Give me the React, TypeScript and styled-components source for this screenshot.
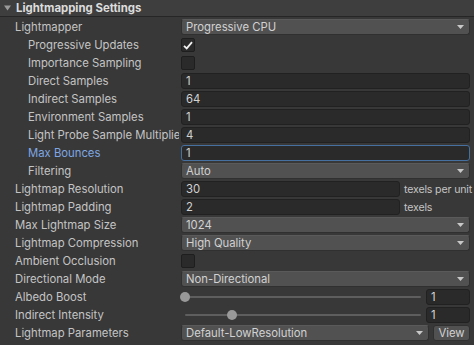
import React from "react";
import styled, { createGlobalStyle } from "styled-components";

const Global = createGlobalStyle`
  html, body { margin: 0; padding: 0; background: #383838; }
  body { font-family: Inter, "Noto Sans", "Liberation Sans", sans-serif; font-size: 11.3px; color: #c4c4c4; }
  * { box-sizing: border-box; }
`;

const Panel = styled.div`
  width: 474px;
  height: 345px;
  background: #383838;
  overflow: hidden;
`;

const Header = styled.div`
  height: 17px;
  display: flex;
  align-items: center;
  gap: 5px;
  padding-left: 4px;
  background: #3e3e3e;
  border-bottom: 1px solid #262626;
`;

const Title = styled.span`
  font-weight: 700;
  color: #dcdcdc;
  font-size: 11.4px;
  line-height: 16px;
`;

const Rows = styled.div`
  display: flex;
  flex-direction: column;
  padding-top: 1px;
`;

const Row = styled.div`
  height: 18px;
  display: flex;
  align-items: center;
  padding: 0 4px 0 15px;
`;

const Label = styled.div<{ $indent: number; $focused?: boolean }>`
  width: 164px;
  margin-right: 2px;
  padding-left: ${(p) => p.$indent * 13}px;
  white-space: nowrap;
  overflow: hidden;
  color: ${(p) => (p.$focused ? "#7ea7e3" : "#c4c4c4")};
  line-height: 18px;
  flex-shrink: 0;
`;

const Control = styled.div`
  flex: 1;
  display: flex;
  align-items: center;
  gap: 4px;
  height: 16px;
  min-width: 0;
`;

const Dropdown = styled.div`
  flex: 1;
  height: 16px;
  display: flex;
  align-items: center;
  justify-content: space-between;
  padding: 0 5px 0 4px;
  background: #515151;
  border: 1px solid #303030;
  border-top-color: #5a5a5a;
  border-radius: 3px;
  color: #d2d2d2;
  line-height: 14px;
  white-space: nowrap;
  min-width: 0;
`;

const Field = styled.div<{ $focused?: boolean }>`
  flex: 1;
  height: 16px;
  display: flex;
  align-items: center;
  padding: 0 4px;
  background: #2a2a2a;
  border: 1px solid ${(p) => (p.$focused ? "#46709f" : "#212121")};
  border-radius: 3px;
  color: #d2d2d2;
  line-height: 14px;
  min-width: 0;
`;

const NumberBox = styled(Field)`
  flex: 0 0 44px;
`;

const Suffix = styled.span`
  flex: 0 0 66px;
  min-width: 0;
  color: #c4c4c4;
  white-space: nowrap;
  font-size: 10.6px;
  letter-spacing: -0.15px;
`;

const Check = styled.div`
  width: 14px;
  height: 14px;
  background: #2a2a2a;
  border: 1px solid #1e1e1e;
  border-radius: 2px;
  display: flex;
  align-items: center;
  justify-content: center;
`;

const SliderArea = styled.div`
  flex: 1;
  height: 16px;
  position: relative;
`;

const Track = styled.div`
  position: absolute;
  left: 4px;
  right: 1px;
  top: 7px;
  height: 2px;
  border-radius: 1px;
  background: #5e5e5e;
`;

const Thumb = styled.div`
  position: absolute;
  top: 3px;
  width: 10px;
  height: 10px;
  margin-left: -5px;
  border-radius: 50%;
  background: #999999;
`;

const Button = styled.div`
  flex: 0 0 37px;
  height: 16px;
  display: flex;
  align-items: center;
  justify-content: center;
  background: #515151;
  border: 1px solid #303030;
  border-radius: 3px;
  color: #d2d2d2;
`;

const Arrow = () => (
  <svg width="7" height="4" viewBox="0 0 7 4" style={{ flexShrink: 0 }}>
    <path d="M0 0 H7 L3.5 4 Z" fill="#c8c8c8" />
  </svg>
);

const Foldout = () => (
  <svg width="7" height="6" viewBox="0 0 7 6">
    <path d="M0 0.5 H7 L3.5 5.5 Z" fill="#9a9a9a" />
  </svg>
);

const Tick = () => (
  <svg width="10" height="9" viewBox="0 0 10 9">
    <path d="M1 4.8 L3.7 7.4 L9 1.2" stroke="#f0f0f0" strokeWidth="1.8" fill="none" />
  </svg>
);

type Item =
  | { kind: "dropdown"; label: string; indent: number; value: string; button?: string }
  | { kind: "check"; label: string; indent: number; checked: boolean }
  | { kind: "field"; label: string; indent: number; value: string; suffix?: string; focused?: boolean }
  | { kind: "slider"; label: string; indent: number; value: string; frac: number };

const items: Item[] = [
  { kind: "dropdown", label: "Lightmapper", indent: 0, value: "Progressive CPU" },
  { kind: "check", label: "Progressive Updates", indent: 1, checked: true },
  { kind: "check", label: "Importance Sampling", indent: 1, checked: false },
  { kind: "field", label: "Direct Samples", indent: 1, value: "1" },
  { kind: "field", label: "Indirect Samples", indent: 1, value: "64" },
  { kind: "field", label: "Environment Samples", indent: 1, value: "1" },
  { kind: "field", label: "Light Probe Sample Multiplier", indent: 1, value: "4" },
  { kind: "field", label: "Max Bounces", indent: 1, value: "1", focused: true },
  { kind: "dropdown", label: "Filtering", indent: 1, value: "Auto" },
  { kind: "field", label: "Lightmap Resolution", indent: 0, value: "30", suffix: "texels per unit" },
  { kind: "field", label: "Lightmap Padding", indent: 0, value: "2", suffix: "texels" },
  { kind: "dropdown", label: "Max Lightmap Size", indent: 0, value: "1024" },
  { kind: "dropdown", label: "Lightmap Compression", indent: 0, value: "High Quality" },
  { kind: "check", label: "Ambient Occlusion", indent: 0, checked: false },
  { kind: "dropdown", label: "Directional Mode", indent: 0, value: "Non-Directional" },
  { kind: "slider", label: "Albedo Boost", indent: 0, value: "1", frac: 0 },
  { kind: "slider", label: "Indirect Intensity", indent: 0, value: "1", frac: 0.2 },
  { kind: "dropdown", label: "Lightmap Parameters", indent: 0, value: "Default-LowResolution", button: "View" },
];

const renderControl = (it: Item) => {
  switch (it.kind) {
    case "dropdown":
      return (
        <>
          <Dropdown>
            <span>{it.value}</span>
            <Arrow />
          </Dropdown>
          {it.button && <Button>{it.button}</Button>}
        </>
      );
    case "check":
      return <Check>{it.checked && <Tick />}</Check>;
    case "field":
      return (
        <>
          <Field $focused={it.focused}>{it.value}</Field>
          {it.suffix && <Suffix>{it.suffix}</Suffix>}
        </>
      );
    case "slider":
      return (
        <>
          <SliderArea>
            <Track />
            <Thumb style={{ left: `calc(4px + (100% - 5px) * ${it.frac})` }} />
          </SliderArea>
          <NumberBox>{it.value}</NumberBox>
        </>
      );
  }
};

export default function App() {
  return (
    <Panel>
      <Global />
      <Header>
        <Foldout />
        <Title>Lightmapping Settings</Title>
      </Header>
      <Rows>
        {items.map((it) => (
          <Row key={it.label}>
            <Label $indent={it.indent} $focused={it.kind === "field" && it.focused}>
              {it.label}
            </Label>
            <Control>{renderControl(it)}</Control>
          </Row>
        ))}
      </Rows>
    </Panel>
  );
}
